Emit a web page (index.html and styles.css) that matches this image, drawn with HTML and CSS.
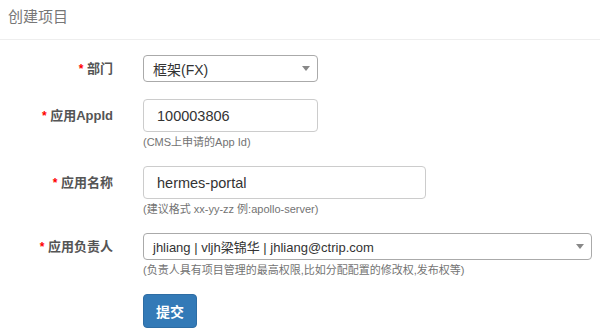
FILE: index.html
```html
<!DOCTYPE html>
<html lang="zh-CN">
<head>
  <meta charset="UTF-8"/>
  <title>创建项目</title>
  <meta name="viewport" content="width=device-width,initial-scale=1"/>
  <link rel="stylesheet" href="styles.css">
</head>
<body>

  <header class="page-header">创建项目</header>

  <form class="form-horizontal">
    <div class="form-group">
      <label class="control-label select-label"><span class="req">*</span> 部门</label>
      <div class="field">
        <div class="select w-sm">
          <span>框架(FX)</span>
          <span class="caret"></span>
        </div>
      </div>
    </div>

    <div class="form-group">
      <label class="control-label" for="appId"><span class="req">*</span> 应用AppId</label>
      <div class="field">
        <input id="appId" class="form-control w-sm" type="text" value="100003806">
        <div class="help-block">(CMS上申请的App Id)</div>
      </div>
    </div>

    <div class="form-group">
      <label class="control-label" for="appName"><span class="req">*</span> 应用名称</label>
      <div class="field">
        <input id="appName" class="form-control w-md" type="text" value="hermes-portal">
        <div class="help-block">(建议格式 xx-yy-zz 例:apollo-server)</div>
      </div>
    </div>

    <div class="form-group">
      <label class="control-label select-label"><span class="req">*</span> 应用负责人</label>
      <div class="field">
        <div class="select select-owner w-lg">
          <span>jhliang | vljh梁锦华 | jhliang@ctrip.com</span>
          <span class="caret"></span>
        </div>
        <div class="help-block">(负责人具有项目管理的最高权限,比如分配配置的修改权,发布权等)</div>
      </div>
    </div>

    <div class="form-group">
      <div></div>
      <div class="field">
        <button type="button" class="btn-primary">提交</button>
      </div>
    </div>
  </form>

</body>
</html>
```

FILE: styles.css
```css
body{margin:0;background:#fff;color:#333;font-family:"Liberation Sans","Noto Sans CJK SC",sans-serif;font-size:14px;}
.page-header{padding:6px 8px 11px;font-size:15px;line-height:22px;color:#777;border-bottom:1px solid #eee;}
.form-horizontal{margin-top:15px;}
.form-group{display:grid;grid-template-columns:113px 1fr;column-gap:30px;margin-bottom:16px;}
.control-label{text-align:right;font-size:13px;font-weight:bold;color:#555;line-height:33px;}
.control-label.select-label{line-height:27px;}
.req{color:#f00;font-size:12px;}
.form-control{box-sizing:border-box;display:block;height:33px;padding:0 13px;border:1px solid #ccc;border-radius:4px;font:inherit;font-size:14.5px;color:#333;background:#fff;}
.select{box-sizing:border-box;display:flex;align-items:center;justify-content:space-between;height:27px;padding:0 7px 0 9px;border:1px solid #aaa;border-radius:4px;font-size:14px;color:#333;background:#fff;}
.select-owner{font-size:13px;}
.caret{width:0;height:0;border-top:5px solid #888;border-left:4px solid transparent;border-right:4px solid transparent;}
.w-sm{width:175px;}
.w-md{width:283px;}
.w-lg{width:449px;}
.help-block{margin-top:3px;font-size:11px;line-height:15px;color:#737373;}
.btn-primary{box-sizing:border-box;width:54px;height:34px;padding:0;border:1px solid #2e6da4;border-radius:4px;background:#337ab7;color:#fff;font:inherit;font-size:14px;font-weight:bold;cursor:pointer;}
```
